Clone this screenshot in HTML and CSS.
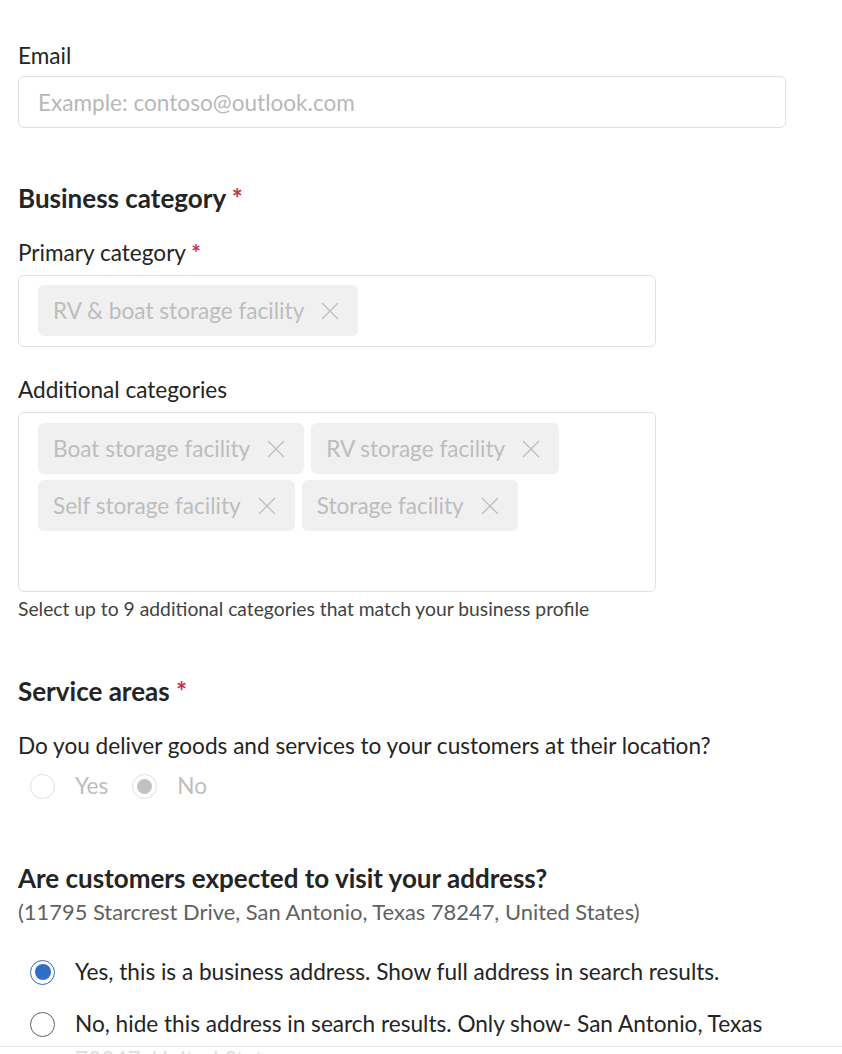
FILE: index.html
```html
<!DOCTYPE html>
<html lang="en">
<head>
<meta charset="utf-8">
<title>Business profile</title>
<link rel="stylesheet" href="styles.css">
</head>
<body>
<main class="form">
  <section class="field field-email">
    <label class="label">Email</label>
    <div class="input"><span class="placeholder">Example: contoso@outlook.com</span></div>
  </section>

  <section class="group group-category">
    <h2 class="heading">Business category <span class="req">*</span></h2>
    <div class="field">
      <label class="label">Primary category <span class="req">*</span></label>
      <div class="tagbox tagbox-primary">
        <span class="chip">RV &amp; boat storage facility<svg class="x" viewBox="0 0 20 20"><path d="M2 2L18 18M18 2L2 18"/></svg></span>
      </div>
    </div>
    <div class="field field-additional">
      <label class="label">Additional categories</label>
      <div class="tagbox tagbox-additional">
        <span class="chip">Boat storage facility<svg class="x" viewBox="0 0 20 20"><path d="M2 2L18 18M18 2L2 18"/></svg></span>
        <span class="chip">RV storage facility<svg class="x" viewBox="0 0 20 20"><path d="M2 2L18 18M18 2L2 18"/></svg></span>
        <span class="chip">Self storage facility<svg class="x" viewBox="0 0 20 20"><path d="M2 2L18 18M18 2L2 18"/></svg></span>
        <span class="chip">Storage facility<svg class="x" viewBox="0 0 20 20"><path d="M2 2L18 18M18 2L2 18"/></svg></span>
      </div>
      <p class="hint">Select up to 9 additional categories that match your business profile</p>
    </div>
  </section>

  <section class="group group-service">
    <h2 class="heading">Service areas <span class="req">*</span></h2>
    <p class="question">Do you deliver goods and services to your customers at their location?</p>
    <div class="radios-inline">
      <span class="radio disabled"><span class="circle"></span><span class="rtext">Yes</span></span>
      <span class="radio disabled checked"><span class="circle"></span><span class="rtext">No</span></span>
    </div>
  </section>

  <section class="group group-visit">
    <h2 class="heading">Are customers expected to visit your address?</h2>
    <p class="address">(11795 Starcrest Drive, San Antonio, Texas 78247, United States)</p>
    <div class="radios-stack">
      <span class="radio active checked"><span class="circle"></span><span class="rtext">Yes, this is a business address. Show full address in search results.</span></span>
      <span class="radio active"><span class="circle"></span><span class="rtext">No, hide this address in search results. Only show- San Antonio, Texas 78247, United States</span></span>
    </div>
  </section>
</main>
<div class="footer-bar"></div>
</body>
</html>
```

FILE: styles.css
```css
html, body {
  margin: 0;
  padding: 0;
  background: #ffffff;
}
body {
  font-family: Lato, "Noto Sans", sans-serif;
  color: #242424;
  overflow: hidden;
  height: 1054px;
}
.form {
  padding: 42px 0 0 18px;
  width: 768px;
}
.field {
  display: flex;
  flex-direction: column;
}
.label {
  font-size: 22.6px;
  line-height: 28px;
  margin-bottom: 8px;
}
.field-email .label {
  margin-bottom: 6px;
}
.req {
  color: #c4314b;
  font-weight: 700;
}
.input {
  height: 50px;
  border: 1px solid #e0e0e0;
  border-radius: 6px;
  display: flex;
  align-items: center;
  padding: 0 19px;
}
.placeholder {
  font-size: 22.6px;
  color: #b8b8b8;
}
.group-category {
  margin-top: 54px;
}
.heading {
  font-size: 26px;
  font-weight: 700;
  line-height: 32px;
  margin: 0 0 25px;
}
.tagbox {
  width: 598px;
  border: 1px solid #e0e0e0;
  border-radius: 6px;
  padding: 9px 19px 9px;
  display: flex;
  flex-wrap: wrap;
  gap: 6px 7px;
  align-content: flex-start;
}
.tagbox-primary {
  height: 52px;
  box-sizing: content-box;
}
.tagbox-additional {
  box-sizing: content-box;
  padding-top: 10px;
  padding-bottom: 8px;
  height: 160px;
}
.field-additional {
  margin-top: 29px;
}
.chip {
  display: inline-flex;
  align-items: center;
  height: 51px;
  padding: 0 18px 0 15px;
  background: #f0f0f0;
  border-radius: 6px;
  font-size: 22.6px;
  color: #bdbdbd;
  white-space: nowrap;
}
.x {
  width: 20px;
  height: 20px;
  margin-left: 16px;
  stroke: #bdbdbd;
  stroke-width: 1.3;
  fill: none;
}
.hint {
  font-size: 19.3px;
  color: #424242;
  margin: 6px 0 0;
  line-height: 22px;
}
.group-service {
  margin-top: 55px;
}
.question {
  font-size: 22.6px;
  line-height: 28px;
  margin: 0 0 12px;
}
.radios-inline {
  display: flex;
  gap: 24px;
  padding-left: 12px;
}
.radio {
  display: inline-flex;
  align-items: center;
  gap: 20px;
  font-size: 22.6px;
  line-height: 28px;
}
.circle {
  width: 25px;
  height: 25px;
  border-radius: 50%;
  border: 1px solid #616161;
  box-sizing: border-box;
  display: flex;
  align-items: center;
  justify-content: center;
  flex: none;
}
.radio.disabled .circle {
  border-color: #e0e0e0;
}
.radio.disabled .rtext {
  color: #bdbdbd;
}
.radio.disabled.checked .circle::after {
  content: "";
  width: 15px;
  height: 15px;
  border-radius: 50%;
  background: #c2c2c2;
}
.radio.active.checked .circle {
  border-color: #2f6dc6;
}
.radio.active.checked .circle::after {
  content: "";
  width: 16px;
  height: 16px;
  border-radius: 50%;
  background: #2f6dc6;
}
.group-visit {
  margin-top: 62px;
}
.group-visit .heading {
  margin-bottom: 4px;
}
.address {
  font-size: 21.9px;
  line-height: 28px;
  color: #616161;
  margin: 0 0 28px;
}
.radios-stack {
  display: flex;
  flex-direction: column;
  gap: 16px;
  padding-left: 12px;
}
.radios-stack .radio {
  align-items: flex-start;
  width: 760px;
  line-height: 36px;
}
.radios-stack .circle {
  margin-top: 5.5px;
}
.footer-bar {
  position: fixed;
  left: 0;
  right: 0;
  bottom: 0;
  height: 7px;
  border-top: 1px solid #e6e6e6;
  background: rgba(255, 255, 255, 0.85);
}
```
